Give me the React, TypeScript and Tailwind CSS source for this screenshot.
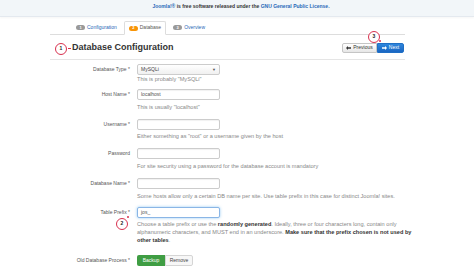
import type { ReactNode } from 'react';

function Badge({ n, active }: { n: number; active?: boolean }) {
  return (
    <span
      className={`flex h-[5px] w-[9px] items-center justify-center rounded-full text-[4px] font-bold leading-none text-white ${
        active ? 'bg-[#f89406]' : 'bg-[#999]'
      }`}
    >
      {n}
    </span>
  );
}

function Marker({ n, className }: { n: number; className: string }) {
  return (
    <div className={`absolute ${className}`}>
      <div className="flex h-[12px] w-[12px] items-center justify-center rounded-full border border-[#d8314f] bg-white text-[5px] font-bold text-[#222]">
        {n}
      </div>
    </div>
  );
}

function Row({
  label,
  children,
  help,
  className = '',
}: {
  label: string;
  children: ReactNode;
  help?: ReactNode;
  className?: string;
}) {
  return (
    <div className={`grid grid-cols-[80px_1fr] gap-x-[7px] ${className}`}>
      <label className="flex h-[11px] items-center justify-end text-[#555]">{label}</label>
      <div>
        {children}
        {help}
      </div>
    </div>
  );
}

function Help({ children, className = 'mt-[2px]' }: { children: ReactNode; className?: string }) {
  return <p className={`whitespace-nowrap text-[5.6px] leading-[8px] text-[#888] ${className}`}>{children}</p>;
}

function Input({ value, focus }: { value?: string; focus?: boolean }) {
  return (
    <div
      className={`flex h-[11px] w-[83px] items-center rounded-[2px] border bg-white px-[3px] text-[#555] ${
        focus
          ? 'border-[#8ab6e6] shadow-[0_0_3px_rgba(82,168,236,0.6)]'
          : 'border-[#ccc] shadow-[inset_0_1px_1px_rgba(0,0,0,0.06)]'
      }`}
    >
      {value}
    </div>
  );
}

export default function App() {
  return (
    <div className="relative h-[266px] w-[474px] overflow-hidden bg-white font-['Liberation_Sans',Arial,sans-serif] text-[5px]">
      <header className="h-[17px] border-b border-[#e4e9ef] bg-[#f2f6f9] pl-[8px] pt-[2px] text-center font-bold leading-[8px] text-[#333] shadow-[0_1px_2px_rgba(0,0,0,0.04)]">
        <span className="text-[#2a69b8]">Joomla!®</span> is free software released under the{' '}
        <span className="text-[#2a69b8]">GNU General Public License.</span>
      </header>

      <main className="ml-[50px] w-[355px]">
        <nav className="mt-[4px] flex gap-[3px] border-b border-[#ddd] pl-[22px]">
          <div className="flex h-[13px] items-center gap-[2px] px-[4px] text-[#2a69b8]">
            <Badge n={1} />
            Configuration
          </div>
          <div className="-mb-px flex h-[14px] items-center gap-[2px] rounded-t-[2px] border border-[#ddd] border-b-white bg-white px-[4px] text-[#555]">
            <Badge n={2} active />
            Database
          </div>
          <div className="flex h-[13px] items-center gap-[2px] px-[4px] text-[#2a69b8]">
            <Badge n={3} />
            Overview
          </div>
        </nav>

        <div className="flex h-[25px] items-center justify-between border-b border-[#e5e5e5] pl-[22px] pr-[1px] pt-[2px]">
          <h1 className="text-[9px] font-bold text-[#333]">Database Configuration</h1>
          <div className="flex">
            <button className="flex h-[10px] w-[35px] items-center justify-center gap-[2px] rounded-l-[2px] border border-[#c5c5c5] bg-gradient-to-b from-white to-[#e6e6e6] text-[#333]">
              <svg width="5" height="4" viewBox="0 0 10 8" fill="#333">
                <path d="M0 4 L4 0 L4 2.5 L10 2.5 L10 5.5 L4 5.5 L4 8 Z" />
              </svg>
              Previous
            </button>
            <button className="flex h-[10px] w-[27px] items-center justify-center gap-[2px] rounded-r-[2px] border border-[#1f6fc5] bg-gradient-to-b from-[#2f86dc] to-[#1a66c2] text-white">
              <svg width="5" height="4" viewBox="0 0 10 8" fill="#fff">
                <path d="M10 4 L6 0 L6 2.5 L0 2.5 L0 5.5 L6 5.5 L6 8 Z" />
              </svg>
              Next
            </button>
          </div>
        </div>

        <form className="mt-[4px]">
          <Row label="Database Type *" className="pb-[6px]" help={<Help className="">This is probably "MySQLi"</Help>}>
            <div className="flex h-[11px] w-[83px] items-center justify-between rounded-[2px] border border-[#ccc] bg-gradient-to-b from-white to-[#f0f0f0] px-[3px] text-[#444]">
              MySQLi
              <span className="text-[4px] text-[#555]">▼</span>
            </div>
          </Row>
          <Row label="Host Name *" className="pb-[8px]" help={<Help className="mt-[3px]">This is usually "localhost"</Help>}>
            <Input value="localhost" />
          </Row>
          <Row
            label="Username *"
            className="pb-[8px]"
            help={<Help>Either something as "root" or a username given by the host</Help>}
          >
            <Input />
          </Row>
          <Row
            label="Password"
            className="pb-[8px]"
            help={<Help className="mt-[3px]">For site security using a password for the database account is mandatory</Help>}
          >
            <Input />
          </Row>
          <Row
            label="Database Name *"
            className="pb-[7px]"
            help={
              <Help className="mt-[3px]">
                Some hosts allow only a certain DB name per site. Use table prefix in this case for distinct Joomla! sites.
              </Help>
            }
          >
            <Input />
          </Row>
          <Row
            label="Table Prefix *"
            className="pb-[11px]"
            help={
              <Help>
                Choose a table prefix or use the <b className="text-[#333]">randomly generated</b>. Ideally, three or four characters long, contain only
                <br />
                alphanumeric characters, and MUST end in an underscore.{' '}
                <b className="text-[#333]">Make sure that the prefix chosen is not used by</b>
                <br />
                <b className="text-[#333]">other tables</b>.
              </Help>
            }
          >
            <Input value="jos_" focus />
          </Row>
          <Row label="Old Database Process *">
            <div className="flex h-[11px]">
              <span className="flex w-[28px] items-center justify-center rounded-l-[2px] bg-[#3f9d43] text-white">Backup</span>
              <span className="flex w-[28px] items-center justify-center rounded-r-[2px] border border-[#d5d5d5] bg-[#f7f7f7] text-[#444]">
                Remove
              </span>
            </div>
          </Row>
        </form>
      </main>

      <Marker n={1} className="left-[55px] top-[43px]" />
      <div className="absolute left-[68px] top-[48px] h-[1px] w-[3px] bg-[#d8314f]" />
      <Marker n={3} className="left-[368px] top-[31px]" />
      <div className="absolute left-[379px] top-[40px] h-[2px] w-[2px] rounded-full bg-[#d8314f]" />
      <Marker n={2} className="left-[116px] top-[218px]" />
      <div className="absolute left-[127px] top-[216px] h-[2px] w-[2px] rounded-full bg-[#d8314f]" />
    </div>
  );
}
